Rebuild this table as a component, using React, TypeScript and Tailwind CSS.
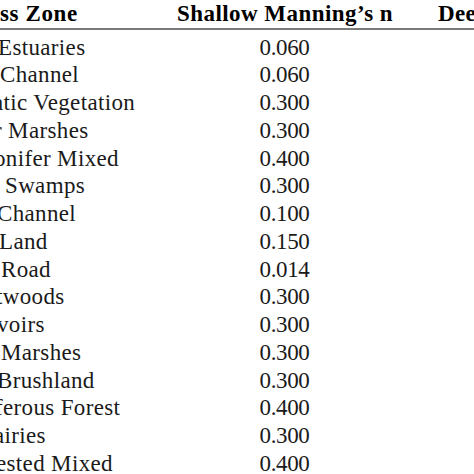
import React from 'react';

type Row = { label: string; shift: string; shallow: string };

// left column is cut off by the frame, so only the visible part of each label is kept
const rows: Row[] = [
  { label: 'Estuaries', shift: '-ml-[2px]', shallow: '0.060' },
  { label: 'Channel', shift: 'ml-0', shallow: '0.060' },
  { label: 'atic Vegetation', shift: '-ml-[7px]', shallow: '0.300' },
  { label: 'r Marshes', shift: '-ml-[6px]', shallow: '0.300' },
  { label: 'onifer Mixed', shift: '-ml-[6px]', shallow: '0.400' },
  { label: 'Swamps', shift: 'ml-[5px]', shallow: '0.300' },
  { label: 'Channel', shift: '-ml-[3px]', shallow: '0.100' },
  { label: 'Land', shift: '-ml-[1px]', shallow: '0.150' },
  { label: 'Road', shift: 'ml-[1px]', shallow: '0.014' },
  { label: 'twoods', shift: '-ml-[4px]', shallow: '0.300' },
  { label: 'voirs', shift: '-ml-[3px]', shallow: '0.300' },
  { label: 'Marshes', shift: 'ml-[1px]', shallow: '0.300' },
  { label: 'Brushland', shift: '-ml-[3px]', shallow: '0.300' },
  { label: 'ferous Forest', shift: '-ml-[5px]', shallow: '0.400' },
  { label: 'airies', shift: '-ml-[6px]', shallow: '0.300' },
  { label: 'ested Mixed', shift: '-ml-[4px]', shallow: '0.400' },
];

export default function App() {
  return (
    <div
      className="w-[474px] h-[474px] overflow-hidden bg-white text-[#1a1a1a] text-[23px] tracking-[0.35px]"
      style={{ fontFamily: '"Liberation Serif", serif' }}
    >
      {/* Header */}
      <div className="flex h-[28px] items-center font-bold text-black whitespace-nowrap">
        <div className="w-[177px] flex-none tracking-[0.6px]">ss Zone</div>
        <div className="w-[215px] flex-none text-center tracking-[0.45px]">Shallow Manning’s n</div>
        <div className="flex-none pl-[46px]">Deep Manning’s n</div>
      </div>
      <div className="h-[2px] bg-[#7a7a7a]" />

      {/* Body */}
      <div className="pt-[4px]">
        {rows.map((r, i) => (
          <div key={i} className="flex h-[27.75px] items-center whitespace-nowrap">
            <div className="w-[177px] flex-none overflow-hidden">
              <span className={`block ${r.shift}`}>{r.label}</span>
            </div>
            <div className="w-[215px] flex-none text-center tracking-[-0.4px]">{r.shallow}</div>
          </div>
        ))}
      </div>
    </div>
  );
}
